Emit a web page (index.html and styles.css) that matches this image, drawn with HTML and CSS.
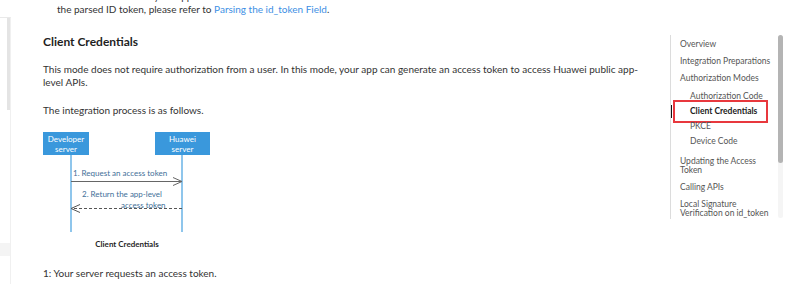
FILE: index.html
```html
<!DOCTYPE html>
<html lang="en">
<head>
  <meta charset="UTF-8">
  <title>Client Credentials</title>
  <meta name="viewport" content="width=device-width, initial-scale=1.0">
  <link rel="stylesheet" href="styles.css">
</head>
<body>

  <div class="page">

    <aside class="side">
      <div class="side-thumb"></div>
      <div class="side-row"></div>
    </aside>

    <main class="doc">
      <ul class="steps">
        <li>For details about how your app obtains the user information in a<br>
          the parsed ID token, please refer to <a href="#">Parsing the id_token Field</a>.</li>
      </ul>

      <h3>Client Credentials</h3>

      <p>This mode does not require authorization from a user. In this mode, your app can generate an access token to access Huawei public app-level APIs.</p>

      <p class="intro">The integration process is as follows.</p>

      <figure class="flow">
        <svg width="168" height="100" viewBox="0 0 168 100">
          <line x1="28" y1="23" x2="28" y2="100" stroke="#8fc6ec" stroke-width="2"/>
          <line x1="139" y1="23" x2="139" y2="100" stroke="#8fc6ec" stroke-width="2"/>
          <rect x="0" y="0" width="46" height="23" fill="#3a98dc"/>
          <rect x="112" y="0" width="55" height="23" fill="#3a98dc"/>
          <text class="box-label" x="23" y="9.5">Developer</text>
          <text class="box-label" x="23" y="20">server</text>
          <text class="box-label" x="139.5" y="9.5">Huawei</text>
          <text class="box-label" x="139.5" y="20">server</text>

          <line x1="28" y1="49.5" x2="139" y2="49.5" stroke="#666" stroke-width="1"/>
          <polyline points="130,45.5 139,49.5 130,53.5" fill="none" stroke="#666" stroke-width="1"/>
          <text class="msg" x="30" y="44">1. Request an access token</text>

          <line x1="139" y1="76.5" x2="29" y2="76.5" stroke="#555" stroke-width="1" stroke-dasharray="3 2"/>
          <polyline points="37,72.5 28,76.5 37,80.5" fill="none" stroke="#555" stroke-width="1"/>
          <text class="msg" x="39" y="65">2. Return the app-level</text>
          <text class="msg" x="78" y="75.5">access token</text>
        </svg>
        <figcaption>Client Credentials</figcaption>
      </figure>

      <p class="step">1: Your server requests an access token.</p>
    </main>

    <nav class="toc">
      <ul class="toc-list">
        <li><a href="#">Overview</a></li>
        <li><a href="#">Integration Preparations</a></li>
        <li><a href="#">Authorization Modes</a>
          <ul class="toc-sub">
            <li><a href="#">Authorization Code</a></li>
            <li class="active"><a href="#">Client Credentials</a></li>
            <li><a href="#">PKCE</a></li>
            <li><a href="#">Device Code</a></li>
          </ul>
        </li>
        <li><a href="#">Updating the Access Token</a></li>
        <li><a href="#">Calling APIs</a></li>
        <li><a href="#">Local Signature Verification on id_token</a></li>
      </ul>
      <div class="toc-scroll">
        <div class="toc-thumb"></div>
      </div>
    </nav>

  </div>

</body>
</html>
```

FILE: styles.css
```css
body {
  margin: 0;
  background: white;
  color: #333;
  font-family: Lato, "Liberation Sans", sans-serif;
  font-size: 10px;
  line-height: 13px;
  overflow: hidden;
}

a {
  color: #3d8fe4;
  text-decoration: none;
}

.page {
  display: flex;
  height: 284px;
}

/* left panel */

.side {
  width: 10px;
  margin-top: 17px;
  border-top: 1px solid #e9e9e9;
  border-right: 1px solid #f0f0f0;
}

.side-thumb {
  width: 3px;
  height: 92px;
  margin-left: 7px;
  background: #e4e4e4;
}

.side-row {
  height: 13px;
  margin-top: 133px;
  background: #f4f4f4;
}

/* main document */

.doc {
  flex: 1;
  padding: 0 28px 0 32px;
  margin-top: -10px;
}

.steps {
  margin: 0;
  padding-left: 14px;
  list-style: none;
  white-space: nowrap;
}

h3 {
  margin: 18px 0 0;
  font-size: 12px;
  line-height: 16px;
  color: #1f1f1f;
}

p {
  margin: 13px 0 0;
}

.intro {
  margin-top: 15px;
}

.flow {
  margin: 15px 0 0;
  width: 168px;
}

.flow svg {
  display: block;
}

.box-label {
  fill: white;
  font-family: Lato, "Liberation Sans", sans-serif;
  font-size: 8px;
  text-anchor: middle;
}

.msg {
  fill: #3f6f98;
  font-family: Lato, "Liberation Sans", sans-serif;
  font-size: 8px;
}

figcaption {
  margin-top: 6px;
  text-align: center;
  font-size: 8px;
  font-weight: bold;
  color: #1f1f1f;
}

.step {
  margin-top: 16px;
}

/* right toc */

.toc {
  width: 130px;
  padding-top: 35px;
  display: flex;
  align-items: flex-start;
}

.toc-list {
  width: 98px;
  height: 183px;
  overflow: hidden;
  margin: 0;
  padding: 1px 0 0 9px;
  list-style: none;
  border-left: 1px solid #dcdcdc;
  font-size: 8.5px;
  line-height: 9px;
}

.toc-list > li {
  padding: 4px 0;
}

.toc-list a {
  color: #555;
}

.toc-sub {
  margin: 0;
  padding: 6px 0 0 10px;
  list-style: none;
}

.toc-sub li {
  position: relative;
  padding: 3px 0;
}

.toc-sub li.active {
  outline: 2px solid #e8383d;
  outline-offset: 2px;
  margin: 0 14px 0 -13px;
  padding-left: 13px;
}

.toc-sub li.active a {
  color: #222;
  font-weight: bold;
}

.toc-sub li.active::before {
  content: "";
  position: absolute;
  left: -7px;
  top: 1px;
  width: 2px;
  height: 13px;
  background: #111;
}

.toc-scroll {
  width: 5px;
  height: 183px;
  background: #f5f5f5;
  border-radius: 3px;
}

.toc-thumb {
  height: 128px;
  background: #b4b4b4;
  border-radius: 3px;
}
```
